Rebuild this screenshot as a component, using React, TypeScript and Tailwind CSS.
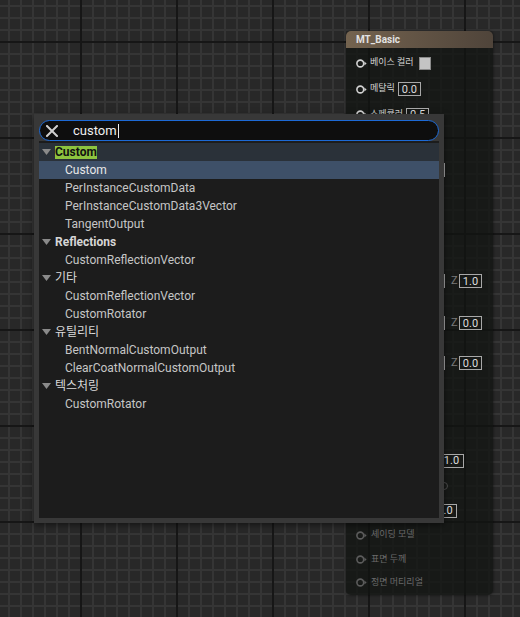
import React from "react";

const FONT = "font-['Roboto','Noto_Sans_CJK_KR',sans-serif]";

function PinIcon({ dim }: { dim?: boolean }) {
  const c = dim ? "#5c5c5c" : "#d2d2d2";
  return (
    <svg width="11" height="9" viewBox="0 0 11 9" className="shrink-0">
      <circle cx="4.3" cy="4.5" r="3.4" fill="none" stroke={c} strokeWidth="1.6" />
      <path d="M8.4 2.6 L10.6 4.5 L8.4 6.4 Z" fill={c} />
    </svg>
  );
}

function Box({ v, w }: { v: string; w: string }) {
  return (
    <div
      className={`h-[14px] ${w} border border-[#a8a8a8] flex items-center justify-center text-[11px] leading-none text-[#dedede]`}
    >
      {v}
    </div>
  );
}

function Tri() {
  return (
    <svg width="9" height="6" viewBox="0 0 9 6" className="shrink-0">
      <polygon points="0,0 9,0 4.5,6" fill="#8a8a8a" />
    </svg>
  );
}

function Category({ label, hl, hover, kr }: { label: string; hl?: boolean; hover?: boolean; kr?: boolean }) {
  return (
    <div className={`flex items-center h-[18px] pl-[3px] gap-[4px] ${hover ? "bg-[#2a3139]" : ""}`}>
      <Tri />
      {hl ? (
        <span className="bg-[#8dc43f] text-[#111] font-bold text-[12px] leading-[13px]">{label}</span>
      ) : kr ? (
        <span className="text-[#dadada] font-normal text-[12px] leading-[13px]">{label}</span>
      ) : (
        <span className="text-[#d6d6d6] font-bold text-[12px] leading-[13px]">{label}</span>
      )}
    </div>
  );
}

function Item({ label, sel }: { label: string; sel?: boolean }) {
  return (
    <div
      className={`flex items-center h-[18px] pl-[26px] text-[12px] ${
        sel ? "bg-[#3e5068] text-[#e8e8e8]" : "text-[#c6c6c6]"
      }`}
    >
      {label}
    </div>
  );
}

function XYZRow({ h, z }: { h: string; z: string }) {
  return (
    <div className={`flex items-center ${h} pl-[10px] overflow-hidden`}>
      <PinIcon />
      <span className="ml-[3px] text-[9px] text-[#d4d4d4] whitespace-nowrap">노멀</span>
      <div className="ml-auto flex items-center mr-[11px]">
        <Box v="0.0" w="w-[22px]" />
        <span className="w-[8px] ml-[4px] text-[11px] text-[#7a7a7a]">Y</span>
        <Box v="0.0" w="w-[22px]" />
        <span className="w-[8px] ml-[6px] text-[11px] text-[#7a7a7a]">Z</span>
        <Box v={z} w="w-[23px]" />
      </div>
    </div>
  );
}

function LabelRow({ h, label, dim }: { h: string; label: string; dim?: boolean }) {
  return (
    <div className={`flex items-center ${h} pl-[10px]`}>
      <PinIcon dim={dim} />
      <span className={`ml-[4px] text-[9px] whitespace-nowrap ${dim ? "text-[#6a6a6a]" : "text-[#d4d4d4]"}`}>
        {label}
      </span>
    </div>
  );
}

function Node() {
  return (
    <div className="absolute left-[346px] top-[31px] w-[147px] h-[564px] rounded-[5px] bg-[rgba(18,20,17,0.74)] shadow-[0_0_3px_rgba(0,0,0,0.6)] flex flex-col">
      <div className="h-[17px] rounded-t-[5px] bg-[linear-gradient(to_right,#74634f,#4f443a)] flex items-center pl-[10px] text-[10px] font-bold text-[#e2e2e2]">
        MT_Basic
      </div>
      <div className="pt-[2px] flex flex-col">
        <div className="flex items-center h-[26px] pl-[10px]">
          <PinIcon />
          <span className="ml-[3px] text-[9px] text-[#d4d4d4] whitespace-nowrap">베이스 컬러</span>
          <div className="ml-[5px] w-[12px] h-[13px] bg-[#c4c4c4] border border-[#8a8a8a]" />
        </div>
        <div className="flex items-center h-[26px] pl-[10px]">
          <PinIcon />
          <span className="ml-[3px] text-[9px] text-[#d4d4d4] whitespace-nowrap">메탈릭</span>
          <div className="ml-[3px]">
            <Box v="0.0" w="w-[23px]" />
          </div>
        </div>
        <div className="flex items-center h-[25px] pl-[10px]">
          <PinIcon />
          <span className="ml-[3px] text-[9px] text-[#d4d4d4] whitespace-nowrap">스페큘러</span>
          <div className="ml-[3px]">
            <Box v="0.5" w="w-[23px]" />
          </div>
        </div>
        <div className="flex items-center h-[30px] pl-[10px]">
          <PinIcon />
          <span className="ml-[3px] text-[9px] text-[#d4d4d4] whitespace-nowrap">러프니스</span>
        </div>
        <div className="flex items-center h-[26px] pl-[10px]">
          <PinIcon />
          <span className="ml-[3px] text-[9px] text-[#d4d4d4] whitespace-nowrap">이방성</span>
          <div className="ml-auto mr-[48px]">
            <Box v="0.0" w="w-[23px]" />
          </div>
        </div>
        <LabelRow h="h-[26px]" label="이미시브 컬러" />
        <LabelRow h="h-[26px]" label="오파시티" />
        <LabelRow h="h-[25px]" label="오파시티 마스크" />
        <XYZRow h="h-[42px]" z="1.0" />
        <XYZRow h="h-[42px]" z="0.0" />
        <XYZRow h="h-[38px]" z="0.0" />
        <LabelRow h="h-[33px]" label="월드 포지션 오프셋" />
        <LabelRow h="h-[33px]" label="서브서피스 컬러" />
        <div className="flex items-center h-[25px] pl-[10px]">
          <PinIcon />
          <span className="ml-[3px] text-[9px] text-[#d4d4d4] whitespace-nowrap">앰비언트 오클루전</span>
          <div className="ml-auto mr-[30px]">
            <Box v="1.0" w="w-[26px]" />
          </div>
        </div>
        <div className="flex items-center h-[26px] pl-[10px]">
          <PinIcon />
          <span className="ml-[3px] text-[9px] text-[#d4d4d4] whitespace-nowrap">리프랙션</span>
          <div className="ml-auto mr-[45px] w-[8px] h-[8px] rounded-full border-[1.5px] border-[#4c4c4c]" />
        </div>
        <div className="flex items-center h-[23px] pl-[10px]">
          <PinIcon />
          <span className="ml-[3px] text-[9px] text-[#d4d4d4] whitespace-nowrap">픽셀 뎁스</span>
          <div className="ml-auto mr-[36px]">
            <Box v="0.0" w="w-[24px]" />
          </div>
        </div>
        <LabelRow h="h-[26px]" label="셰이딩 모델" dim />
        <LabelRow h="h-[23px]" label="표면 두께" dim />
        <LabelRow h="h-[23px]" label="정면 머티리얼" dim />
      </div>
    </div>
  );
}

function Popup() {
  return (
    <div className="absolute left-[34px] top-[114px] w-[410px] h-[409px] bg-[#383838] px-[5px] pt-[6px] pb-[5px] flex flex-col shadow-[0_2px_6px_rgba(0,0,0,0.5)]">
      <div className="h-[21px] rounded-full border-[1.5px] border-[#1d6ad6] bg-[#0e0e0e] flex items-center pl-[6px]">
        <svg width="12" height="12" viewBox="0 0 12 12" className="shrink-0">
          <path d="M1 1 L11 11 M11 1 L1 11" stroke="#d0d0d0" strokeWidth="2" strokeLinecap="square" />
        </svg>
        <span className="ml-[15px] text-[13px] text-[#f0f0f0] leading-none">custom</span>
        <span className="ml-[1px] w-[1px] h-[14px] bg-[#f0f0f0]" />
      </div>
      <div className="flex-1 bg-[#1c1c1c] pt-[2px] flex flex-col">
        <Category label="Custom" hl hover />
        <Item label="Custom" sel />
        <Item label="PerInstanceCustomData" />
        <Item label="PerInstanceCustomData3Vector" />
        <Item label="TangentOutput" />
        <Category label="Reflections" />
        <Item label="CustomReflectionVector" />
        <Category label="기타" kr />
        <Item label="CustomReflectionVector" />
        <Item label="CustomRotator" />
        <Category label="유틸리티" kr />
        <Item label="BentNormalCustomOutput" />
        <Item label="ClearCoatNormalCustomOutput" />
        <Category label="텍스처링" kr />
        <Item label="CustomRotator" />
      </div>
    </div>
  );
}

export default function App() {
  return (
    <div
      className={`relative w-[520px] h-[617px] overflow-hidden ${FONT} bg-[#282828] [background-image:linear-gradient(to_right,#161616_2px,transparent_2px),linear-gradient(to_bottom,#161616_2px,transparent_2px),linear-gradient(to_right,#353535_2px,transparent_2px),linear-gradient(to_bottom,#353535_2px,transparent_2px)] [background-size:96px_96px,96px_96px,12px_12px,12px_12px] [background-position:80px_41px,80px_41px,8px_5px,8px_5px]`}
    >
      <Node />
      <Popup />
    </div>
  );
}
